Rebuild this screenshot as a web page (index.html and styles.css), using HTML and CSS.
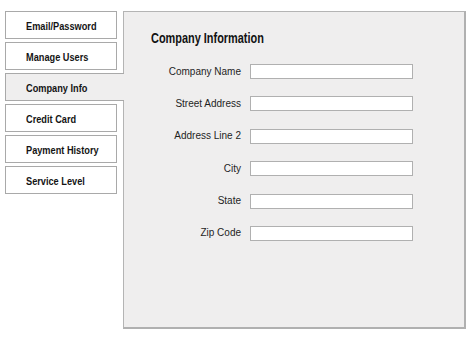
FILE: index.html
```html
<!DOCTYPE html>
<html>
<head>
<meta charset="utf-8">
<link rel="stylesheet" href="styles.css">
</head>
<body>
<div class="layout">
  <nav class="tabs">
    <div class="tab"><span class="tab-text">Email/Password</span></div>
    <div class="tab"><span class="tab-text">Manage Users</span></div>
    <div class="tab active"><span class="tab-text">Company Info</span></div>
    <div class="tab"><span class="tab-text">Credit Card</span></div>
    <div class="tab"><span class="tab-text">Payment History</span></div>
    <div class="tab"><span class="tab-text">Service Level</span></div>
  </nav>
  <section class="panel">
    <h1 class="title"><span class="title-text">Company Information</span></h1>
    <div class="form">
      <label class="label">Company Name</label><div class="field"></div>
      <label class="label">Street Address</label><div class="field"></div>
      <label class="label">Address Line 2</label><div class="field"></div>
      <label class="label">City</label><div class="field"></div>
      <label class="label">State</label><div class="field"></div>
      <label class="label">Zip Code</label><div class="field"></div>
    </div>
  </section>
</div>
</body>
</html>
```
FILE: styles.css
```css
html, body {
  margin: 0;
  padding: 0;
  background: #ffffff;
}
body {
  width: 474px;
  height: 339px;
  overflow: hidden;
  font-family: "Liberation Sans", Arial, sans-serif;
  color: #1b1b1b;
}
.layout {
  display: flex;
  align-items: flex-start;
  padding: 11px 0 0 5px;
}
.tabs {
  width: 112px;
  display: flex;
  flex-direction: column;
  gap: 3px;
  flex: none;
}
.tab {
  box-sizing: border-box;
  height: 28px;
  border: 1px solid #a9a9a9;
  background: #ffffff;
  padding-left: 20px;
  display: flex;
  align-items: center;
  font-weight: bold;
  font-size: 11.5px;
  color: #141414;
}
.tab-text {
  display: inline-block;
  white-space: nowrap;
  transform: scaleX(0.8);
  transform-origin: left center;
  padding-top: 1px;
}
.tab.active {
  background: #efeeee;
  border-right: none;
  width: 119px;
  position: relative;
  z-index: 2;
}
.panel {
  box-sizing: border-box;
  margin-left: 6px;
  width: 343px;
  height: 318px;
  background: #efeeee;
  border: 1px solid #b4b4b4;
  border-right: 2px solid #b0b0b0;
  border-bottom: 2px solid #b0b0b0;
  padding: 18px 0 0 27px;
  flex: none;
}
.title {
  margin: 0;
  font-weight: bold;
  font-size: 14px;
  line-height: 16px;
  color: #121212;
}
.title-text {
  display: inline-block;
  white-space: nowrap;
  transform: scaleX(0.78);
  transform-origin: left center;
}
.form {
  margin: 18px 0 0 -27px;
  display: grid;
  grid-template-columns: 117px 163px;
  column-gap: 9px;
  row-gap: 17.4px;
  align-items: center;
}
.label {
  text-align: right;
  font-size: 10px;
  line-height: 12px;
  color: #1e1e1e;
}
.field {
  box-sizing: border-box;
  height: 15px;
  background: #ffffff;
  border: 1px solid #b0b0b0;
}
```
